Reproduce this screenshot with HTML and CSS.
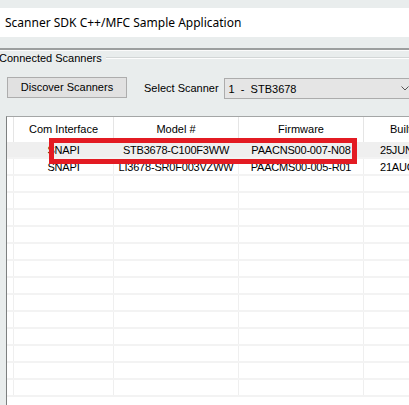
FILE: index.html
```html
<!DOCTYPE html>
<html>
<head>
<meta charset="utf-8">
<link rel="stylesheet" href="styles.css">
</head>
<body>
<div class="window">
  <div class="titlebar">Scanner SDK C++/MFC Sample Application</div>
  <div class="menugap"></div>
  <div class="divider"></div>
  <div class="group">
    <div class="legend"><span class="legend-text">Connected Scanners</span><i class="gline"></i></div>
    <div class="toolbar">
      <div class="button">Discover Scanners</div>
      <div class="label">Select Scanner</div>
      <div class="combo"><span class="combo-text">1  -  STB3678</span>
        <svg class="chev" width="8" height="5" viewBox="0 0 8 5"><path d="M0.5 0.5 L4 4 L7.5 0.5" fill="none" stroke="#555" stroke-width="1"/></svg>
      </div>
    </div>
    <div class="list">
      <div class="row header">
        <div class="cell c0"></div>
        <div class="cell">Com Interface</div>
        <div class="cell">Model #</div>
        <div class="cell">Firmware</div>
        <div class="cell left">Built</div>
      </div>
      <div class="row sel">
        <div class="cell c0"></div>
        <div class="cell">SNAPI</div>
        <div class="cell">STB3678-C100F3WW</div>
        <div class="cell">PAACNS00-007-N08</div>
        <div class="cell left">25JUN2020</div>
      </div>
      <div class="row">
        <div class="cell c0"></div>
        <div class="cell">SNAPI</div>
        <div class="cell">LI3678-SR0F003VZWW</div>
        <div class="cell">PAACMS00-005-R01</div>
        <div class="cell left">21AUG2019</div>
      </div>
      <div class="row"><div class="cell c0"></div><div class="cell"></div><div class="cell"></div><div class="cell"></div><div class="cell left"></div></div>
      <div class="row"><div class="cell c0"></div><div class="cell"></div><div class="cell"></div><div class="cell"></div><div class="cell left"></div></div>
      <div class="row"><div class="cell c0"></div><div class="cell"></div><div class="cell"></div><div class="cell"></div><div class="cell left"></div></div>
      <div class="row"><div class="cell c0"></div><div class="cell"></div><div class="cell"></div><div class="cell"></div><div class="cell left"></div></div>
      <div class="row"><div class="cell c0"></div><div class="cell"></div><div class="cell"></div><div class="cell"></div><div class="cell left"></div></div>
      <div class="row"><div class="cell c0"></div><div class="cell"></div><div class="cell"></div><div class="cell"></div><div class="cell left"></div></div>
      <div class="row"><div class="cell c0"></div><div class="cell"></div><div class="cell"></div><div class="cell"></div><div class="cell left"></div></div>
      <div class="row"><div class="cell c0"></div><div class="cell"></div><div class="cell"></div><div class="cell"></div><div class="cell left"></div></div>
      <div class="row"><div class="cell c0"></div><div class="cell"></div><div class="cell"></div><div class="cell"></div><div class="cell left"></div></div>
      <div class="row"><div class="cell c0"></div><div class="cell"></div><div class="cell"></div><div class="cell"></div><div class="cell left"></div></div>
      <div class="row"><div class="cell c0"></div><div class="cell"></div><div class="cell"></div><div class="cell"></div><div class="cell left"></div></div>
      <div class="row"><div class="cell c0"></div><div class="cell"></div><div class="cell"></div><div class="cell"></div><div class="cell left"></div></div>
      <div class="row"><div class="cell c0"></div><div class="cell"></div><div class="cell"></div><div class="cell"></div><div class="cell left"></div></div>
    </div>
  </div>
  <div class="highlight-box"></div>
</div>
</body>
</html>
```

FILE: styles.css
```css
html, body {
  margin: 0;
  padding: 0;
}
body {
  width: 409px;
  height: 405px;
  overflow: hidden;
  background: #e9eded;
  font-family: "Liberation Sans", Arial, sans-serif;
  font-size: 11px;
  color: #000;
}
.window {
  position: relative;
  width: 409px;
  height: 405px;
  overflow: hidden;
}
.titlebar {
  margin-top: 8px;
  height: 29px;
  line-height: 29px;
  background: #ffffff;
  padding-left: 5px;
  font-family: "Noto Sans", "Open Sans", sans-serif;
  font-size: 12px;
  white-space: nowrap;
}
.menugap {
  height: 11px;
}
.divider {
  height: 0;
  border-top: 2px solid #9c9f9f;
  border-bottom: 1px solid #fbfbfb;
}
.group {
  display: flex;
  flex-direction: column;
}
.legend {
  display: flex;
  height: 14px;
  margin-top: 1px;
  align-items: flex-start;
}
.legend-text {
  line-height: 13px;
  white-space: nowrap;
  margin-left: -1px;
}
.gline {
  flex: 1;
  margin-left: 4px;
  margin-top: 5px;
  height: 0;
  border-top: 1px solid #d3d7d7;
  border-bottom: 1px solid #fdfdfd;
}
.toolbar {
  display: flex;
  align-items: flex-start;
  height: 22px;
  margin-top: 11px;
  padding-left: 7px;
}
.button {
  box-sizing: border-box;
  flex: none;
  width: 120px;
  height: 21px;
  border: 1px solid #adadad;
  background: #e1e1e1;
  text-align: center;
  line-height: 19px;
  white-space: nowrap;
}
.label {
  flex: none;
  margin-left: 17px;
  line-height: 22px;
  white-space: nowrap;
}
.combo {
  box-sizing: border-box;
  flex: none;
  width: 194px;
  height: 21px;
  margin-top: 1px;
  margin-left: 5px;
  border: 1px solid #acacac;
  background: #e5e5e5;
  display: flex;
  align-items: center;
  justify-content: space-between;
  padding-left: 4px;
  padding-right: 8px;
}
.combo-text {
  white-space: pre;
}
.chev {
  display: block;
}
.list {
  margin-top: 17px;
  margin-left: 6px;
  width: 420px;
  height: 300px;
  background: #ffffff;
  border-left: 1px solid #7d8080;
  border-top: 1px solid #a4a6a6;
}
.row {
  display: grid;
  grid-template-columns: 7px 100px 125px 125px 150px;
  height: 15px;
  border-bottom: 2px solid #f3f3f3;
  letter-spacing: -0.2px;
}
.row.header {
  height: 25px;
  border-bottom: none;
  letter-spacing: 0;
}
.row.sel {
  background: #efefef;
}
.cell {
  border-right: 1px solid #efefef;
  text-align: center;
  line-height: 16px;
  white-space: nowrap;
  overflow: hidden;
}
.cell.left {
  text-align: left;
  padding-left: 16px;
}
.header .cell {
  line-height: 25px;
  border-right-color: #e5e5e5;
}
.header .cell.left {
  text-align: left;
  padding-left: 26px;
}
.highlight-box {
  position: absolute;
  left: 49px;
  top: 138px;
  width: 298px;
  height: 16px;
  border: 5px solid #e31b23;
}
```
